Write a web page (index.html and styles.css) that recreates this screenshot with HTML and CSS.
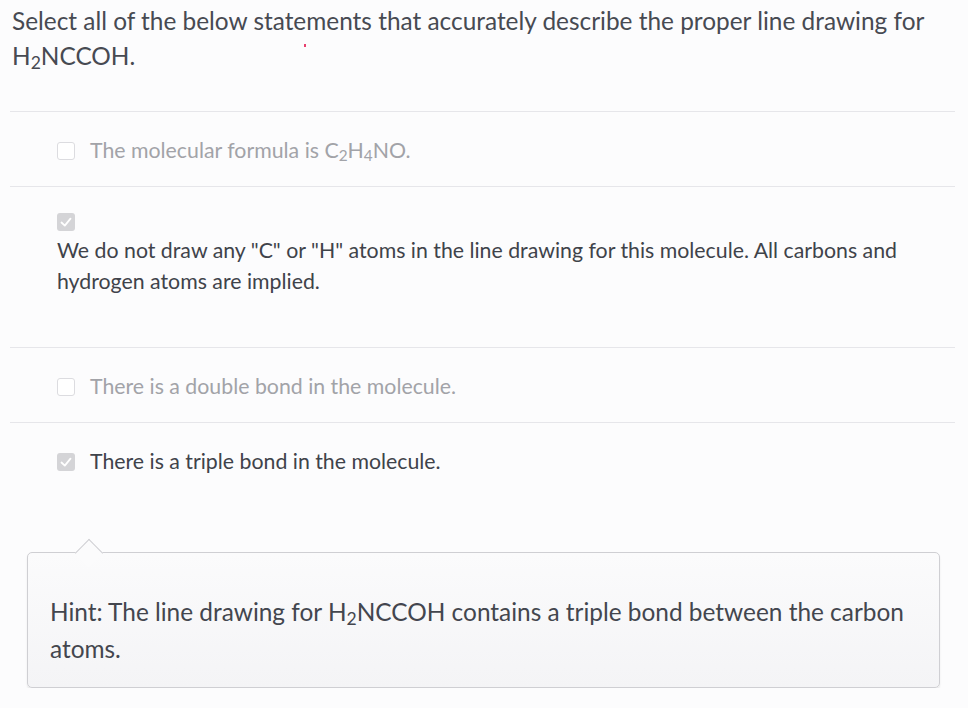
FILE: index.html
```html
<!DOCTYPE html>
<html>
<head>
<meta charset="utf-8">
<link rel="stylesheet" href="styles.css">
</head>
<body>
<div class="page">
  <div class="question">Select all of the below statements that accurately describe the proper line drawing for<br>H<sub>2</sub>NCCOH.<span class="dot"></span></div>
  <div class="choices">
    <div class="choice inline faded">
      <span class="box"></span>
      <span class="label">The molecular formula is C<sub>2</sub>H<sub>4</sub>NO.</span>
    </div>
    <div class="choice stacked">
      <span class="box checked"><svg viewBox="0 0 18 18" width="18" height="18"><path d="M4.5 9.5 L7.8 12.6 L13.5 5.6" fill="none" stroke="#fff" stroke-width="1.8" stroke-linecap="round" stroke-linejoin="round"/></svg></span>
      <div class="label">We do not draw any "C" or "H" atoms in the line drawing for this molecule. All carbons and hydrogen atoms are implied.</div>
    </div>
    <div class="choice inline faded">
      <span class="box"></span>
      <span class="label">There is a double bond in the molecule.</span>
    </div>
    <div class="choice inline last">
      <span class="box checked"><svg viewBox="0 0 18 18" width="18" height="18"><path d="M4.5 9.5 L7.8 12.6 L13.5 5.6" fill="none" stroke="#fff" stroke-width="1.8" stroke-linecap="round" stroke-linejoin="round"/></svg></span>
      <span class="label">There is a triple bond in the molecule.</span>
    </div>
  </div>
  <div class="hint">
    <p>Hint: The line drawing for H<sub>2</sub>NCCOH contains a triple bond between the carbon<br>atoms.</p>
  </div>
</div>
</body>
</html>
```
FILE: styles.css
```css
html, body {
  margin: 0;
  padding: 0;
  background: #fcfcfd;
}
body {
  font-family: Lato, "Open Sans", sans-serif;
  color: #44474f;
}
.page {
  width: 968px;
}
sub {
  font-size: 0.72em;
  vertical-align: -0.22em;
  line-height: 1;
}
.question {
  position: relative;
  font-size: 24.4px;
  line-height: 35px;
  padding: 3px 12px 38px 12px;
  color: #474a52;
}
.dot {
  position: absolute;
  left: 304px;
  top: 44px;
  width: 2px;
  height: 3px;
  background: #e8406e;
}
.choices {
  margin: 0 13px 0 10px;
}
.choice {
  border-top: 1px solid #e6e6ea;
  padding-left: 47px;
}
.choice.inline {
  display: flex;
  align-items: center;
  gap: 15px;
  padding-top: 3px;
  box-sizing: border-box;
  height: 75px;
}
.choice.stacked {
  padding-top: 26px;
  padding-bottom: 50px;
}
.box {
  display: block;
  width: 16px;
  height: 16px;
  border: 1px solid #dcdce0;
  border-radius: 3px;
  background: #fff;
  flex: none;
}
.box.checked {
  width: 18px;
  height: 18px;
  border: none;
  background: #d4d4d7;
}
.box svg {
  display: block;
}
.label {
  font-size: 21.3px;
  line-height: 31px;
  color: #3f434a;
}
.stacked .label {
  margin-top: 4px;
}
.faded .label {
  color: #a2a3a8;
}
.hint {
  position: relative;
  margin: 55px 27px 0 27px;
  width: 913px;
  box-sizing: border-box;
  border: 1px solid #cfcfd3;
  border-radius: 5px;
  background: linear-gradient(#fbfbfc, #f4f4f6);
  box-shadow: 0 2px 2px rgba(0,0,0,0.08);
  padding: 21px 22px 20px 22px;
}
.hint::before {
  content: "";
  position: absolute;
  left: 51px;
  top: -10px;
  width: 19px;
  height: 19px;
  background: #fbfbfc;
  border-left: 1px solid #cfcfd3;
  border-top: 1px solid #cfcfd3;
  transform: rotate(45deg);
}
.hint p {
  margin: 19px 0 0 0;
  font-size: 24.4px;
  line-height: 37px;
  color: #43464e;
}
```
